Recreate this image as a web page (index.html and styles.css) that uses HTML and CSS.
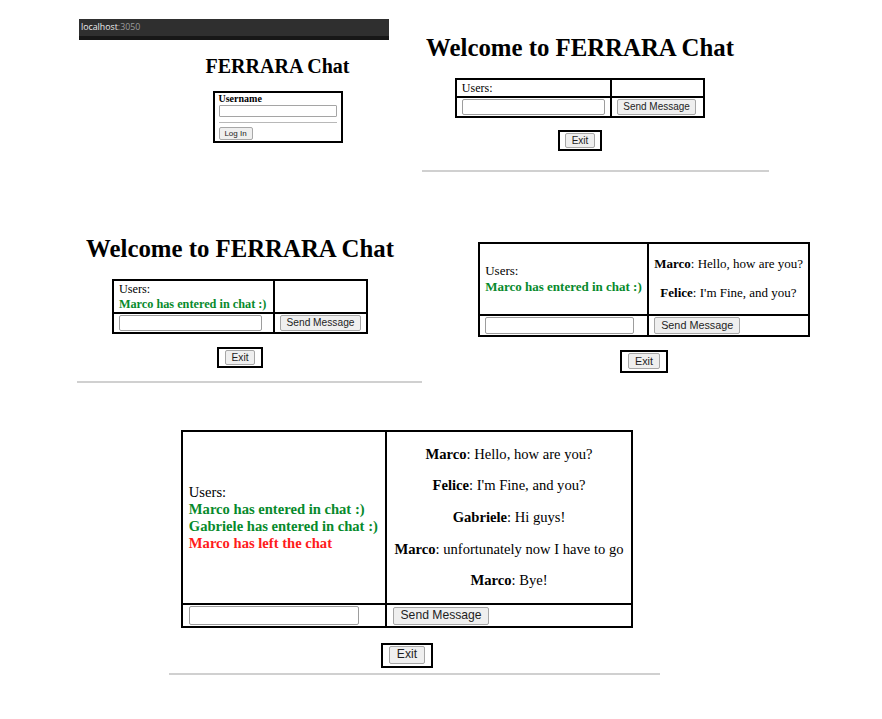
FILE: index.html
```html
<!DOCTYPE html>
<html lang="en">
<head>
<meta charset="utf-8">
<title>FERRARA Chat</title>
<link rel="stylesheet" href="styles.css">
</head>
<body>
<div class="canvas">

  <section class="shot shot-login">
    <div class="urlbar"><span class="host">localhost</span><span class="port">:3050</span></div>
    <div class="page-login">
      <h1 class="login-title">FERRARA Chat</h1>
      <form class="login-box">
        <label class="login-label">Username</label>
        <input class="login-input" type="text">
        <hr class="login-rule">
        <button class="login-btn" type="button">Log In</button>
      </form>
    </div>
  </section>

  <section class="shot shot-empty">
    <div class="page">
      <h1 class="welcome">Welcome to FERRARA Chat</h1>
      <div class="chat">
        <div class="cell users"><span>Users:</span></div>
        <div class="cell messages"></div>
        <div class="cell ctrl"><input class="msg-input" type="text"></div>
        <div class="cell ctrl"><button class="btn" type="button">Send Message</button></div>
      </div>
      <div class="exit-row"><span class="exit-box"><button class="btn" type="button">Exit</button></span></div>
    </div>
    <hr class="divider">
  </section>

  <section class="shot shot-entered">
    <div class="page">
      <h1 class="welcome">Welcome to FERRARA Chat</h1>
      <div class="chat">
        <div class="cell users"><span>Users:</span><span class="join">Marco has entered in chat :)</span></div>
        <div class="cell messages"></div>
        <div class="cell ctrl"><input class="msg-input" type="text"></div>
        <div class="cell ctrl"><button class="btn" type="button">Send Message</button></div>
      </div>
      <div class="exit-row"><span class="exit-box"><button class="btn" type="button">Exit</button></span></div>
    </div>
    <hr class="divider">
  </section>

  <section class="shot shot-talk">
    <div class="page">
      <div class="chat">
        <div class="cell users"><span>Users:</span><span class="join">Marco has entered in chat :)</span></div>
        <div class="cell messages filled">
          <p><b>Marco</b>: Hello, how are you?</p>
          <p><b>Felice</b>: I'm Fine, and you?</p>
        </div>
        <div class="cell ctrl"><input class="msg-input" type="text"></div>
        <div class="cell ctrl"><button class="btn" type="button">Send Message</button></div>
      </div>
      <div class="exit-row"><span class="exit-box"><button class="btn" type="button">Exit</button></span></div>
    </div>
  </section>

  <section class="shot shot-left">
    <div class="page">
      <div class="chat">
        <div class="cell users">
          <span>Users:</span>
          <span class="join">Marco has entered in chat :)</span>
          <span class="join">Gabriele has entered in chat :)</span>
          <span class="leave">Marco has left the chat</span>
        </div>
        <div class="cell messages filled">
          <p><b>Marco</b>: Hello, how are you?</p>
          <p><b>Felice</b>: I'm Fine, and you?</p>
          <p><b>Gabriele</b>: Hi guys!</p>
          <p><b>Marco</b>: unfortunately now I have to go</p>
          <p><b>Marco</b>: Bye!</p>
        </div>
        <div class="cell ctrl"><input class="msg-input" type="text"></div>
        <div class="cell ctrl"><button class="btn" type="button">Send Message</button></div>
      </div>
      <div class="exit-row"><span class="exit-box"><button class="btn" type="button">Exit</button></span></div>
    </div>
    <hr class="divider">
  </section>

</div>
</body>
</html>
```
FILE: styles.css
```css
html, body {
  margin: 0;
  padding: 0;
  background: #fff;
}

body {
  font-family: "Liberation Serif", "Times New Roman", serif;
  color: #000;
}

.canvas {
  position: relative;
  width: 882px;
  height: 719px;
  overflow: hidden;
}

/* each screenshot sits on the canvas like a window on a desktop */
.shot {
  position: absolute;
}

/* ---------- login screenshot ---------- */
.shot-login {
  left: 79px;
  top: 19px;
  width: 310px;
}

.urlbar {
  height: 17px;
  background: #2f2f2f;
  border-bottom: 4px solid #171717;
  padding-left: 2px;
  font-family: "Open Sans", "DejaVu Sans", sans-serif;
  font-size: 8.8px;
  line-height: 17px;
  color: #ececec;
}

.port {
  color: #9c9c9c;
}

.page-login {
  padding-left: 87px;
}

.login-title {
  margin: 15px 0 0;
  font-size: 20px;
  line-height: 23px;
  text-align: center;
  white-space: nowrap;
}

.login-box {
  width: 130px;
  box-sizing: border-box;
  margin: 13px auto 0;
  border: 2px solid #000;
  padding: 0 4px 1px;
}

.login-label {
  display: block;
  font-weight: bold;
  font-size: 10px;
  line-height: 11px;
}

.login-input {
  display: block;
  width: 118px;
  height: 12px;
  box-sizing: border-box;
  margin: 1px 0 0;
  padding: 0;
  border: 1px solid #a5a5a5;
  border-radius: 1px;
}

.login-rule {
  height: 0;
  margin: 5px 0 4px;
  border: 0;
  border-top: 1px solid #b8b8b8;
}

.login-btn {
  display: block;
  width: 34px;
  height: 13px;
  padding: 0;
  font-family: "Liberation Sans", Arial, sans-serif;
  font-size: 8px;
  color: #222;
  background: #efefef;
  border: 1px solid #a8a8a8;
  border-radius: 2px;
}

/* ---------- chat screenshots ---------- */
.welcome {
  margin: 0;
  font-size: 24.8px;
  line-height: 28px;
  text-align: center;
  white-space: nowrap;
}

.chat {
  display: grid;
  grid-template-columns: var(--left-col) var(--right-col);
  gap: 2px;
  width: max-content;
  margin: 0 auto;
  background: #000;
  border: 2px solid #000;
}

.welcome + .chat {
  margin-top: 16px;
}

.cell {
  background: #fff;
  padding: 0.05em 0.4em;
  white-space: nowrap;
}

.users {
  display: flex;
  flex-direction: column;
  justify-content: center;
}

.join {
  color: #078a2c;
  font-weight: bold;
}

.leave {
  color: #ff1b1b;
  font-weight: bold;
}

.messages {
  display: flex;
  flex-direction: column;
  justify-content: center;
  gap: 1em;
  text-align: center;
}

.messages.filled {
  padding-top: 0.95em;
  padding-bottom: 0.95em;
}

.messages p {
  margin: 0;
}

.ctrl {
  display: flex;
  align-items: center;
  padding-top: 0;
  padding-bottom: 0;
}

.msg-input {
  display: block;
  width: var(--input-w);
  height: 1.32em;
  box-sizing: border-box;
  margin: 1px 0;
  padding: 0;
  font-size: inherit;
  border: 1px solid #9d9d9d;
  border-radius: 2px;
  background: #fff;
}

.btn {
  font-family: "Liberation Sans", Arial, sans-serif;
  font-size: 0.833em;
  line-height: 1.15;
  padding: 0.1em 0.55em;
  color: #1e1e1e;
  background: #efefef;
  border: 1px solid #a6a6a6;
  border-radius: 2px;
  white-space: nowrap;
}

.exit-row {
  margin-top: 1em;
  text-align: center;
  line-height: 0;
}

.exit-box {
  display: inline-block;
  border: 2px solid #000;
  padding: 0.08em 0.45em;
}

.divider {
  height: 0;
  margin: 0;
  border: 0;
  border-top: 2px solid #d0d0d0;
}

/* screenshot 2: empty chat */
.shot-empty {
  left: 422px;
  top: 34px;
  width: 347px;
  font-size: 12px;
  --left-col: 153px;
  --right-col: 91px;
  --input-w: 143px;
}

.shot-empty .page {
  width: 316px;
}

.shot-empty .divider {
  margin-top: 19px;
}

/* screenshot 3: Marco entered */
.shot-entered {
  left: 77px;
  top: 235px;
  width: 345px;
  font-size: 12.25px;
  --left-col: 159px;
  --right-col: 91px;
  --input-w: 143px;
}

.shot-entered .page {
  width: 326px;
}

.shot-entered .divider {
  margin-top: 13px;
}

/* screenshot 4: first messages */
.shot-talk {
  left: 478px;
  top: 242px;
  width: 332px;
  font-size: 13px;
  --left-col: 167px;
  --right-col: 159px;
  --input-w: 149px;
}

/* screenshot 5: full conversation */
.shot-left {
  left: 169px;
  top: 430px;
  width: 491px;
  font-size: 14.6px;
  --left-col: 202px;
  --right-col: 244px;
  --input-w: 170px;
}

.shot-left .page {
  width: 476px;
}

.shot-left .divider {
  margin-top: 5px;
}
```
